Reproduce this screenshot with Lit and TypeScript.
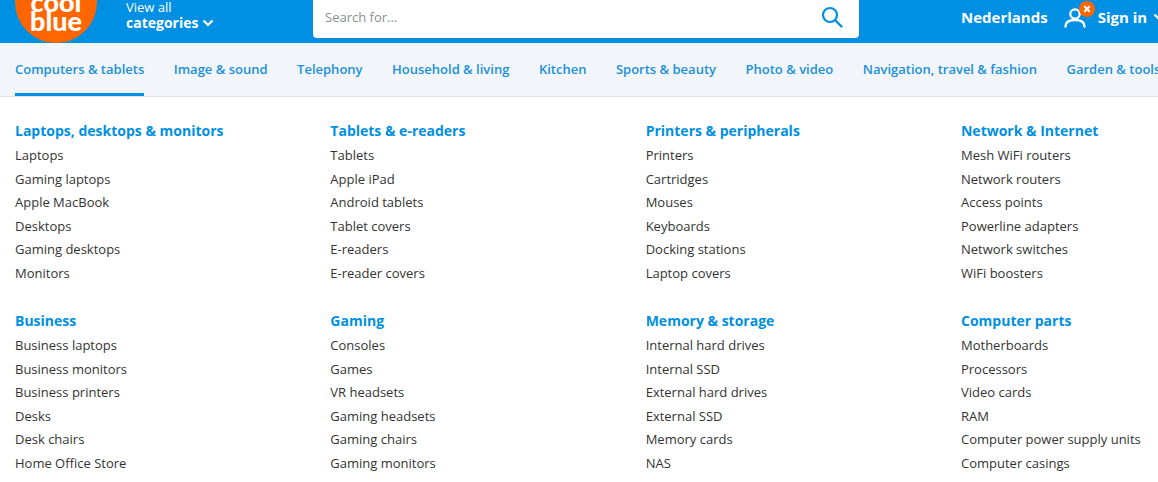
import { LitElement, html, css } from "lit";
import { customElement } from "lit/decorators.js";

const tabs = ["Computers & tablets","Image & sound","Telephony","Household & living","Kitchen","Sports & beauty","Photo & video","Navigation, travel & fashion","Garden & tools"];
const groups: [string, string[]][] = [
  ["Laptops, desktops & monitors",["Laptops","Gaming laptops","Apple MacBook","Desktops","Gaming desktops","Monitors"]],
  ["Tablets & e-readers",["Tablets","Apple iPad","Android tablets","Tablet covers","E-readers","E-reader covers"]],
  ["Printers & peripherals",["Printers","Cartridges","Mouses","Keyboards","Docking stations","Laptop covers"]],
  ["Network & Internet",["Mesh WiFi routers","Network routers","Access points","Powerline adapters","Network switches","WiFi boosters"]],
  ["Business",["Business laptops","Business monitors","Business printers","Desks","Desk chairs","Home Office Store"]],
  ["Gaming",["Consoles","Games","VR headsets","Gaming headsets","Gaming chairs","Gaming monitors"]],
  ["Memory & storage",["Internal hard drives","Internal SSD","External hard drives","External SSD","Memory cards","NAS"]],
  ["Computer parts",["Motherboards","Processors","Video cards","RAM","Computer power supply units","Computer casings"]],
];

@customElement("app-root")
export class AppRoot extends LitElement {
  static styles = css`
    :host { display: block; width: 1158px; height: 482px; overflow: hidden; background: #fff; font-family: "Open Sans", sans-serif; position: relative; }
    .top { height: 43px; background: #0090e3; display: flex; position: relative; overflow: hidden; white-space: nowrap; color: #fff; }
    .logo { position: absolute; left: 15px; top: -39px; width: 82px; height: 82px; border-radius: 50%; background: #ff6600; }
    .logo span { position: absolute; left: 0; width: 82px; text-align: center; font: 900 27px/20px Lato, sans-serif; letter-spacing: 0; color: #fff; }
    .logo .a { top: 31px; }
    .logo .b { top: 50px; }
    .all { margin: -1px 0 0 126px; width: 187px; flex: none; font-size: 13px; line-height: 16px; }
    .all b { font-size: 14px; font-weight: 700; display: flex; align-items: center; gap: 4px; }
    .search { width: 546px; height: 38px; flex: none; background: #fff; border-radius: 0 0 4px 4px; display: flex; align-items: center; justify-content: space-between; padding: 0 16px 4px 12px; box-sizing: border-box; color: #8a8f94; font-size: 13px; }
    .right { margin-left: 102px; display: flex; align-items: center; font-size: 15px; font-weight: 700; height: 33px; }
    .user { width: 25px; height: 28px; margin: 0 9px 0 16px; flex: none; align-self: flex-start; }
    .user svg { display: block; overflow: visible; }
    .chev { margin-left: 6px; flex: none; }
    .tabs { height: 53px; background: #f2f6fa; border-bottom: 1px solid #dde1e4; display: flex; gap: 29.5px; padding-left: 15px; white-space: nowrap; }
    .tab { font-size: 13px; font-weight: 600; color: #1a90dc; line-height: 53px; height: 53px; box-sizing: border-box; flex: none; }
    .tab.on { border-bottom: 3px solid #0090e3; }
    .grid { display: grid; grid-template-columns: repeat(4, 315.33px); row-gap: 24.5px; padding: 23px 0 0 15px; width: 1300px; }
    h3 { margin: 0 0 3px; font-size: 14px; line-height: 21px; font-weight: 700; color: #0090e3; }
    ul { margin: 0; padding: 0; }
    li { display: block; font-size: 13px; line-height: 23.6px; color: #333; white-space: nowrap; }
  `;
  render() {
    return html`
      <div class="top">
        <div class="logo"><span class="a">cool</span><span class="b">blue</span></div>
        <div class="all"><div>View all</div><b>categories
          <svg width="12" height="8" viewBox="0 0 12 8"><path d="M1.500 1.500 6 6l4.500-4.500" fill="none" stroke="#fff" stroke-width="2.2"/></svg></b></div>
        <div class="search"><span>Search for...</span>
          <svg width="22" height="22" viewBox="0 0 22 22"><circle cx="9" cy="9" r="7" fill="none" stroke="#0090e3" stroke-width="2.2"/><path d="M14 14l6.500 6.500" stroke="#0090e3" stroke-width="2.4" stroke-linecap="round"/></svg></div>
        <div class="right">Nederlands
          <div class="user">
            <svg width="25" height="28" viewBox="0 0 25 28">
              <circle cx="11" cy="14" r="4.7" fill="none" stroke="#fff" stroke-width="2.2"/>
              <path d="M1.500 26.500c0-4.500 4-6.500 9.500-6.500s9.500 2 9.500 6.500" fill="none" stroke="#fff" stroke-width="2.4" stroke-linecap="round"/>
              <circle cx="23" cy="9" r="8" fill="#ff6600"/>
              <path d="M20.300 6.300l5.400 5.400M25.700 6.300l-5.400 5.400" stroke="#fff" stroke-width="2"/>
            </svg>
          </div>Sign in
          <svg class="chev" width="12" height="8" viewBox="0 0 12 8"><path d="M1.500 1.500 6 6l4.500-4.500" fill="none" stroke="#fff" stroke-width="2.2"/></svg></div>
      </div>
      <div class="tabs">${tabs.map((t,i)=>html`<div class="tab ${i===0?"on":""}">${t}</div>`)}</div>
      <div class="grid">${groups.map(([h,items])=>html`<div><h3>${h}</h3><ul>${items.map(x=>html`<li>${x}</li>`)}</ul></div>`)}</div>
    `;
  }
}
